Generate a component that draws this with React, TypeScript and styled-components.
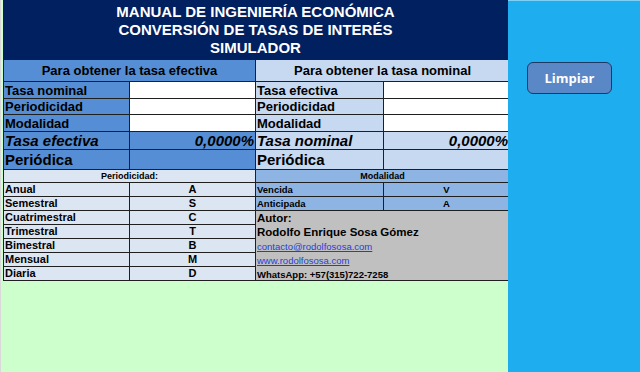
import React from 'react'
import styled, {createGlobalStyle, css} from 'styled-components'

const GlobalStyle = createGlobalStyle`
  html, body {
    margin: 0;
    padding: 0;
    height: 372px;
    overflow: hidden;
    font-family: "Liberation Sans", Arial, sans-serif;
  }
  #root {
    height: 100%;
  }
`

const COLORS = {
    navy: '#002060',
    mid: '#558ed5',
    light: '#c6d9f1',
    pale: '#dce6f2',
    modal: '#8db4e2',
    gray: '#c0c0c0',
    white: '#ffffff',
    green: '#ccffcc',
    side: '#1eaef0',
    line: '#1f1f1f',
}

type Tone = keyof typeof COLORS

const Page = styled.div`
  display: flex;
  height: 372px;
  width: 640px;
`

const Sheet = styled.div`
  width: 508px;
  display: flex;
  flex-direction: column;
  padding-left: 2px;
  box-sizing: border-box;
  background: ${COLORS.green};
  border-left: 1px solid #d9d9d9;
`

const Banner = styled.div`
  height: 59px;
  background: ${COLORS.navy};
  color: #fff;
  display: flex;
  flex-direction: column;
  align-items: center;
  justify-content: center;
  font-weight: bold;
  font-size: 15px;
  line-height: 18px;
  padding-top: 1px;
  box-sizing: border-box;
`

const Grid = styled.table`
  border-collapse: collapse;
  table-layout: fixed;
  width: 506px;
`

const Row = styled.tr<{ $h: number }>`
  height: ${p => p.$h}px;
`

const Cell = styled.td<{
    $tone: Tone;
    $size?: number;
    $italic?: boolean;
    $align?: 'left' | 'center' | 'right';
    $open?: 'top' | 'bottom' | 'both';
}>`
  background: ${p => COLORS[p.$tone]};
  border: 1px solid ${COLORS.line};
  padding: 0 1px 0 1px;
  font-weight: bold;
  font-size: ${p => p.$size ?? 13}px;
  font-style: ${p => (p.$italic ? 'italic' : 'normal')};
  text-align: ${p => p.$align ?? 'left'};
  color: #000;
  white-space: nowrap;
  overflow: hidden;
  line-height: 1;
  vertical-align: middle;
  ${p => (p.$open === 'top' || p.$open === 'both') && css`border-top: none;`}
  ${p => (p.$open === 'bottom' || p.$open === 'both') && css`border-bottom: none;`}
`

const Link = styled.a`
  color: #1f3fd8;
  font-weight: normal;
  text-decoration: underline;
  font-size: 9.5px;
`

const Filler = styled.div`
  flex: 1;
  background: ${COLORS.green};
`

const Side = styled.div`
  flex: 1;
  background: ${COLORS.side};
  padding: 61px 0 0 19px;
  box-sizing: border-box;
  border-top: 1px solid #7fd0f7;
`

const ClearButton = styled.button`
  width: 85px;
  height: 32px;
  background: #5a87c6;
  border: 1.5px solid #1f3864;
  border-radius: 6px;
  color: #fff;
  font-family: "Open Sans", "Liberation Sans", sans-serif;
  font-weight: bold;
  font-size: 13px;
  cursor: pointer;
`

const periods: [string, string][] = [
    ['Anual', 'A'],
    ['Semestral', 'S'],
    ['Cuatrimestral', 'C'],
    ['Trimestral', 'T'],
    ['Bimestral', 'B'],
    ['Mensual', 'M'],
    ['Diaria', 'D'],
]

const App = () => {
    const author: React.ReactNode[] = [
        <span style={{fontSize: 11.5}}>Autor:</span>,
        <span style={{fontSize: 11.5}}>Rodolfo Enrique Sosa Gómez</span>,
        <Link href="#">contacto@rodolfososa.com</Link>,
        <Link href="#">www.rodolfososa.com</Link>,
        <span style={{fontSize: 9.5}}>WhatsApp: +57(315)722-7258</span>,
    ]

    return <Page>
        <GlobalStyle/>
        <Sheet>
            <Banner>
                <div>MANUAL DE INGENIERÍA ECONÓMICA</div>
                <div>CONVERSIÓN DE TASAS DE INTERÉS</div>
                <div>SIMULADOR</div>
            </Banner>
            <Grid>
                <colgroup>
                    <col style={{width: 126}}/>
                    <col style={{width: 126}}/>
                    <col style={{width: 128}}/>
                    <col style={{width: 126}}/>
                </colgroup>
                <tbody>
                <Row $h={22}>
                    <Cell $tone="mid" colSpan={2} $align="center">Para obtener la tasa efectiva</Cell>
                    <Cell $tone="light" colSpan={2} $align="center">Para obtener la tasa nominal</Cell>
                </Row>
                <Row $h={17}>
                    <Cell $tone="mid">Tasa nominal</Cell>
                    <Cell $tone="white"/>
                    <Cell $tone="light">Tasa efectiva</Cell>
                    <Cell $tone="white"/>
                </Row>
                <Row $h={16}>
                    <Cell $tone="mid">Periodicidad</Cell>
                    <Cell $tone="white"/>
                    <Cell $tone="light">Periodicidad</Cell>
                    <Cell $tone="white"/>
                </Row>
                <Row $h={17}>
                    <Cell $tone="mid">Modalidad</Cell>
                    <Cell $tone="white"/>
                    <Cell $tone="light">Modalidad</Cell>
                    <Cell $tone="white"/>
                </Row>
                <Row $h={18}>
                    <Cell $tone="mid" $size={15} $italic>Tasa efectiva</Cell>
                    <Cell $tone="mid" $size={15} $italic $align="right">0,0000%</Cell>
                    <Cell $tone="light" $size={15} $italic>Tasa nominal</Cell>
                    <Cell $tone="light" $size={15} $italic $align="right">0,0000%</Cell>
                </Row>
                <Row $h={20}>
                    <Cell $tone="mid" $size={15}>Periódica</Cell>
                    <Cell $tone="mid"/>
                    <Cell $tone="light" $size={15}>Periódica</Cell>
                    <Cell $tone="light"/>
                </Row>
                <Row $h={13}>
                    <Cell $tone="pale" colSpan={2} $align="center" $size={9}>Periodicidad:</Cell>
                    <Cell $tone="modal" colSpan={2} $align="center" $size={9}>Modalidad</Cell>
                </Row>
                {periods.map(([name, code], i) => (
                    <Row $h={14} key={name}>
                        <Cell $tone="pale" $size={11}>{name}</Cell>
                        <Cell $tone="pale" $size={11} $align="center">{code}</Cell>
                        {i === 0 && <>
                            <Cell $tone="modal" $size={9.5}>Vencida</Cell>
                            <Cell $tone="modal" $size={9.5} $align="center">V</Cell>
                        </>}
                        {i === 1 && <>
                            <Cell $tone="modal" $size={9.5}>Anticipada</Cell>
                            <Cell $tone="modal" $size={9.5} $align="center">A</Cell>
                        </>}
                        {i >= 2 && <Cell $tone="gray" colSpan={2}
                                         $open={i === 2 ? 'bottom' : i === 6 ? 'top' : 'both'}>
                            {author[i - 2]}
                        </Cell>}
                    </Row>
                ))}
                </tbody>
            </Grid>
            <Filler/>
        </Sheet>
        <Side>
            <ClearButton>Limpiar</ClearButton>
        </Side>
    </Page>
}

export default App
